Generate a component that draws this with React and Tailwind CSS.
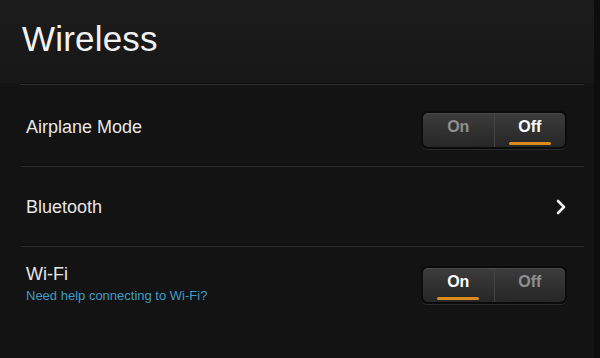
// Kindle-style Wireless settings screen
const Toggle = ({ on }) => {
  const seg = "flex-1 flex flex-col items-center justify-center h-full";
  return (
    <div className="w-[146px] h-[38px] rounded-[6px] bg-[#0b0b0b] p-[2px] shadow-[0_1px_0_#2a2a2a]">
      <div className="flex h-full rounded-[5px] overflow-hidden bg-gradient-to-b from-[#3c3c3c] to-[#262626] border-t border-[#4a4a4a]">
        <div className={seg}>
          <span className={`text-[16px] font-bold leading-none mt-[3px] ${on ? "text-white" : "text-[#8f8f8f]"}`}>On</span>
          <span className={`mt-[7px] w-[42px] h-[3px] rounded-full ${on ? "bg-[#d98b1c]" : "bg-[#2a2a2a]"}`} />
        </div>
        <div className="w-px bg-[#1a1a1a] border-r border-[#444]" />
        <div className={seg}>
          <span className={`text-[16px] font-bold leading-none mt-[3px] ${!on ? "text-white" : "text-[#8f8f8f]"}`}>Off</span>
          <span className={`mt-[7px] w-[42px] h-[3px] rounded-full ${!on ? "bg-[#d98b1c]" : "bg-[#2a2a2a]"}`} />
        </div>
      </div>
    </div>
  );
};

const Divider = ({ inset = "ml-[22px]" }) => (
  <div className={`${inset} mr-[10px] h-[2px] bg-[#2e2e2e] border-t border-[#0c0c0c]`} />
);

export default function App() {
  return (
    <div
      className="w-[600px] h-[358px] bg-[#131313] text-[#ececec] overflow-hidden flex flex-col border-r-[6px] border-[#0d0d0d]"
      style={{ fontFamily: '"Liberation Sans", Arial, sans-serif' }}
    >
      {/* Header */}
      <div className="h-[83px] bg-gradient-to-b from-[#1c1c1c] to-[#171717] px-[22px] pt-[19px]">
        <h1 className="text-[35px] font-normal leading-[40px] text-[#f2f2f2] tracking-[0.2px]">Wireless</h1>
      </div>
      <Divider inset="ml-[20px]" />

      {/* Airplane mode */}
      <div className="h-[80px] flex items-center justify-between pl-[26px] pr-[27px]">
        <span className="text-[18px] text-[#e6e6e6] mt-[5px]">Airplane Mode</span>
        <div className="mt-[10px]">
          <Toggle on={false} />
        </div>
      </div>
      <Divider />

      {/* Bluetooth */}
      <div className="h-[78px] flex items-center justify-between pl-[26px] pr-[27px]">
        <span className="text-[18px] text-[#e6e6e6] mt-[2px]">Bluetooth</span>
        <svg width="12" height="16" viewBox="0 0 12 16" fill="none" className="mt-[2px]">
          <path d="M3 2 L9 8 L3 14" stroke="#f2f2f2" strokeWidth="2.6" strokeLinecap="round" strokeLinejoin="round" />
        </svg>
      </div>
      <Divider />

      {/* Wi-Fi */}
      <div className="flex items-start justify-between pl-[26px] pr-[27px] pt-[15px]">
        <div className="flex flex-col">
          <span className="text-[18px] leading-[22px] text-[#e6e6e6] mt-[1px]">Wi-Fi</span>
          <span className="text-[13px] leading-[18px] text-[#3f9cc4] mt-[2px]">Need help connecting to Wi-Fi?</span>
        </div>
        <div className="mt-[4px]">
          <Toggle on={true} />
        </div>
      </div>
    </div>
  );
}
